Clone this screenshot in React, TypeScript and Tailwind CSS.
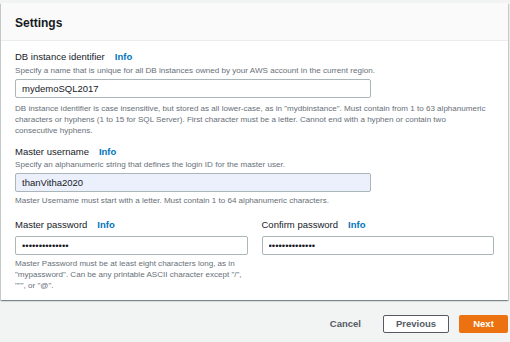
import React from "react";

const font = { fontFamily: '"Liberation Sans", Arial, sans-serif' };

function Label({ text }: { text: string }) {
  return (
    <div className="flex items-center gap-[10px] h-[14px] text-[9.5px] leading-[14px]">
      <span className="text-[#16191f]">{text}</span>
      <span className="font-bold text-[#0073bb]">Info</span>
    </div>
  );
}

function Hint({ children }: { children: React.ReactNode }) {
  return (
    <p className="text-[8.05px] leading-[11px] text-[#687078]">{children}</p>
  );
}

function Field({
  value,
  type = "text",
  className = "",
}: {
  value: string;
  type?: string;
  className?: string;
}) {
  return (
    <input
      readOnly
      type={type}
      value={value}
      className={`block h-[19px] rounded-[2px] border border-[#aab7b8] px-[6px] text-[9.5px] text-[#16191f] outline-none ${className}`}
    />
  );
}

export default function App() {
  return (
    <div
      className="w-[510px] h-[342px] bg-[#f2f3f3] pt-[3px] pl-[1px] pr-[2px]"
      style={font}
    >
      <div className="bg-white shadow-[0_1px_1px_0_rgba(0,28,36,0.3),1px_1px_1px_0_rgba(0,28,36,0.15),-1px_1px_1px_0_rgba(0,28,36,0.15)]">
        <div className="h-[38px] bg-[#fafafa] border-b border-[#eaeded] flex items-center px-[14px] pt-[3px]">
          <h2 className="text-[12px] font-bold text-[#16191f]">Settings</h2>
        </div>

        <div className="px-[14px] pt-[9px] pb-[9px]">
          {/* DB instance identifier */}
          <Label text="DB instance identifier" />
          <div className="h-[12px] text-[8.1px] leading-[12px] text-[#687078] mt-[1px]">
            Specify a name that is unique for all DB instances owned by your AWS account in the current region.
          </div>
          <Field value="mydemoSQL2017" className="w-[356px] mt-[2px]" />
          <div className="mt-[5px]">
            <Hint>
              DB instance identifier is case insensitive, but stored as all lower-case, as in "mydbinstance". Must contain from 1 to 63 alphanumeric characters or hyphens (1 to 15 for SQL Server). First character must be a letter. Cannot end with a hyphen or contain two
              <br />
              consecutive hyphens.
            </Hint>
          </div>

          {/* Master username */}
          <div className="mt-[9px]">
            <Label text="Master username" />
            <div className="h-[12px] text-[8.1px] leading-[12px] text-[#687078]">
              Specify an alphanumeric string that defines the login ID for the master user.
            </div>
            <Field
              value="thanVitha2020"
              className="w-[356px] mt-[2px] bg-[#ebf0fc]"
            />
            <div className="mt-[3px]">
              <Hint>
                Master Username must start with a letter. Must contain 1 to 64 alphanumeric characters.
              </Hint>
            </div>
          </div>

          {/* Passwords */}
          <div className="mt-[12px] grid grid-cols-2 gap-[14px]">
            <div>
              <Label text="Master password" />
              <Field
                type="password"
                value="mypassword2020"
                className="w-full mt-[4px]"
              />
              <div className="mt-[3px]">
                <Hint>
                  Master Password must be at least eight characters long, as in "mypassword". Can be any printable ASCII character except "/", """, or "@".
                </Hint>
              </div>
            </div>
            <div>
              <Label text="Confirm password" />
              <Field
                type="password"
                value="mypassword2020"
                className="w-full mt-[4px]"
              />
            </div>
          </div>
        </div>
      </div>

      <div className="flex items-center justify-end mt-[15px] text-[9.5px] font-bold">
        <button className="text-[#545b64] mr-[22px]">Cancel</button>
        <button className="h-[18px] w-[66px] border border-[#545b64] rounded-[2px] bg-white text-[#545b64] mr-[10px]">
          Previous
        </button>
        <button className="h-[18px] w-[49px] rounded-[2px] bg-[#ec7211] text-white">
          Next
        </button>
      </div>
    </div>
  );
}
